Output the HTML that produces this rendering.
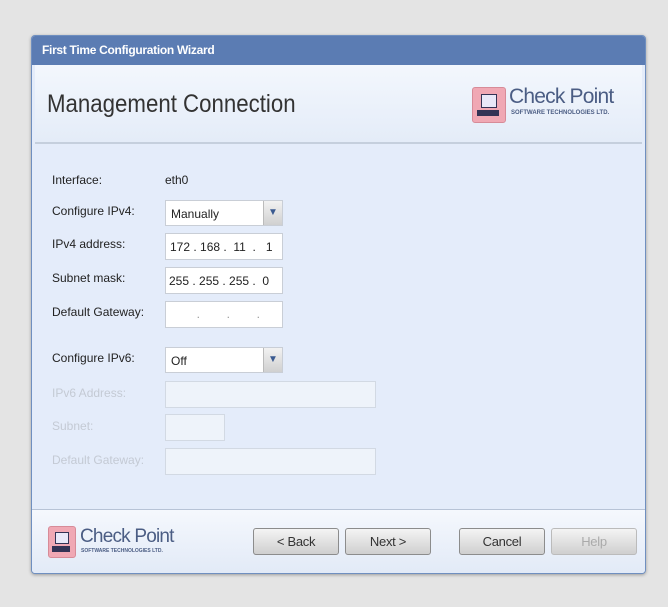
<!DOCTYPE html>
<html><head><style>
body{margin:0;width:668px;height:607px;background:#e4e4e4;font-family:"Liberation Sans",sans-serif;position:relative;overflow:hidden}
.a{position:absolute}
.dlg{left:31px;top:35px;width:613px;height:537px;border:1px solid #6f8fc0;border-radius:4px;background:#e4ecfa;box-shadow:0 1px 3px #999;overflow:hidden}
.tb{left:0;top:0;width:613px;height:29px;background:#5b7cb3;color:#fff;font-weight:bold;font-size:12px;line-height:29px;padding-left:10px;box-sizing:border-box;letter-spacing:-0.3px}
.hdr{left:3px;top:29px;width:607px;height:77px;background:linear-gradient(#f3f7fd,#e4ecf8);border-bottom:2px solid #c5cfdd}
.lbl{font-size:12px;color:#222}
.dis{color:#c4cad4}
.box{background:#fff;border:1px solid #c9ced6;box-sizing:border-box;font-size:12px;color:#222}
.dbox{background:#eef3fa;border:1px solid #d2d9e3;box-sizing:border-box}
.sel .arr{position:absolute;right:0;top:0;width:18px;height:100%;background:linear-gradient(#f2f2f2,#d0d0d0);border-left:1px solid #bbb;color:#3a5a90;font-size:10px;text-align:center;line-height:24px}
.btn{height:27px;border:1px solid #8c8c8c;border-radius:3px;background:linear-gradient(#f4f4f4,#cfcfcf);font-size:13px;color:#333;text-align:center;line-height:26px;box-sizing:border-box;letter-spacing:-0.3px}
.logo{width:32px;height:34px;background:#f0a8b4;border:1px solid #d78b98;border-radius:3px}
</style></head><body>
<div class="a dlg">
 <div class="a tb">First Time Configuration Wizard</div>
 <div class="a hdr">
  <div class="a" style="left:12px;top:25px;font-size:25px;color:#333;transform:scaleX(0.89);transform-origin:0 0">Management Connection</div>
  <div class="a logo" style="left:437px;top:22px"><div class="a" style="left:8px;top:6px;width:14px;height:12px;background:#e8e8f8;border:1px solid #335"></div><div class="a" style="left:4px;top:22px;width:22px;height:6px;background:#335"></div></div>
  <div class="a" style="left:474px;top:20px;font-size:21px;color:#4b5d84;letter-spacing:-0.8px">Check Point</div>
  <div class="a" style="left:476px;top:45px;font-size:6px;color:#4b5d84;font-weight:bold">SOFTWARE TECHNOLOGIES LTD.</div>
 </div>
 <div class="a" style="left:0;top:473px;width:613px;height:1px;background:#b7c3d6"></div>
 <div class="a" style="left:0;top:474px;width:613px;height:63px;background:linear-gradient(#f5f8fd,#e2eaf7)"></div>
</div>
<div class="a lbl" style="left:52px;top:173px">Interface:</div>
<div class="a lbl" style="left:165px;top:173px">eth0</div>
<div class="a lbl" style="left:52px;top:204px">Configure IPv4:</div>
<div class="a box sel" style="left:165px;top:200px;width:118px;height:26px"><span class="a" style="left:5px;top:6px">Manually</span><div class="arr">&#9660;</div></div>
<div class="a lbl" style="left:52px;top:237px">IPv4 address:</div>
<div class="a box" style="left:165px;top:233px;width:118px;height:27px"><span class="a" style="left:4px;top:6px;white-space:pre">172 . 168 .  11  .   1</span></div>
<div class="a lbl" style="left:52px;top:271px">Subnet mask:</div>
<div class="a box" style="left:165px;top:267px;width:118px;height:27px"><span class="a" style="left:3px;top:6px;white-space:pre">255 . 255 . 255 .  0</span></div>
<div class="a lbl" style="left:52px;top:305px">Default Gateway:</div>
<div class="a box" style="left:165px;top:301px;width:118px;height:27px"><span class="a" style="left:4px;top:5px;white-space:pre;color:#999">        .        .        .</span></div>
<div class="a lbl" style="left:52px;top:351px">Configure IPv6:</div>
<div class="a box sel" style="left:165px;top:347px;width:118px;height:26px"><span class="a" style="left:5px;top:6px">Off</span><div class="arr">&#9660;</div></div>
<div class="a lbl dis" style="left:52px;top:386px">IPv6 Address:</div>
<div class="a dbox" style="left:165px;top:381px;width:211px;height:27px"></div>
<div class="a lbl dis" style="left:52px;top:419px">Subnet:</div>
<div class="a dbox" style="left:165px;top:414px;width:60px;height:27px"></div>
<div class="a lbl dis" style="left:52px;top:453px">Default Gateway:</div>
<div class="a dbox" style="left:165px;top:448px;width:211px;height:27px"></div>
<div class="a logo" style="left:48px;top:526px;width:26px;height:30px"><div class="a" style="left:6px;top:5px;width:12px;height:10px;background:#e8e8f8;border:1px solid #335"></div><div class="a" style="left:3px;top:19px;width:18px;height:6px;background:#335"></div></div>
<div class="a" style="left:80px;top:526px;font-size:19px;color:#4b5d84;letter-spacing:-0.8px">Check Point</div>
<div class="a" style="left:81px;top:548px;font-size:5px;color:#4b5d84;font-weight:bold">SOFTWARE TECHNOLOGIES LTD.</div>
<div class="a btn" style="left:253px;top:528px;width:86px">&lt; Back</div>
<div class="a btn" style="left:345px;top:528px;width:86px">Next &gt;</div>
<div class="a btn" style="left:459px;top:528px;width:86px">Cancel</div>
<div class="a btn" style="left:551px;top:528px;width:86px;color:#aaa;border-color:#bbb">Help</div>
</body></html>
